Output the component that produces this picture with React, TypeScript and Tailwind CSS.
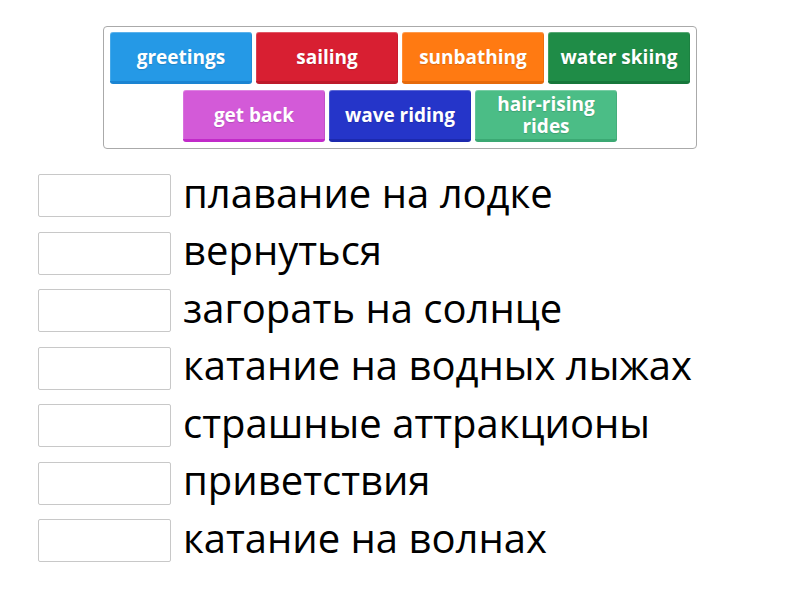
import React from "react";

const tiles1 = [
  { t: "greetings", c: "bg-[#2599e6] border-[#1b84d2]" },
  { t: "sailing", c: "bg-[#d81f32] border-[#bd1a2a]" },
  { t: "sunbathing", c: "bg-[#ff7a12] border-[#e66a0a]" },
  { t: "water skiing", c: "bg-[#1f8c47] border-[#17773b]" },
];
const tiles2 = [
  { t: "get back", c: "bg-[#d35ad8] border-[#c12ac9]" },
  { t: "wave riding", c: "bg-[#2535c9] border-[#1c29ae]" },
  { t: "hair-rising rides", c: "bg-[#4bbd86] border-[#3ba873]" },
];

const rows = [
  "плавание на лодке",
  "вернуться",
  "загорать на солнце",
  "катание на водных лыжах",
  "страшные аттракционы",
  "приветствия",
  "катание на волнах",
];

function Tile({ t, c }: { t: string; c: string }) {
  return (
    <div
      className={`w-[142px] h-[52px] rounded-[3px] border-b-[3px] ${c} flex items-center justify-center text-center text-white font-bold text-[19px] leading-[22px] px-3 shadow-[inset_0_1px_0_rgba(255,255,255,0.25),inset_1px_0_0_rgba(255,255,255,0.15),inset_-1px_0_0_rgba(0,0,0,0.08)]`}
    >
      <span className="[text-shadow:0_1px_1px_rgba(0,0,0,0.15)]">{t}</span>
    </div>
  );
}

export default function App() {
  return (
    <div className="w-[800px] h-[600px] bg-white" style={{ fontFamily: '"Open Sans", sans-serif' }}>
      <div className="pt-[26px] flex justify-center">
        <div className="w-[594px] border border-[#aaaaaa] rounded-[4px] pt-[5px] pb-[6px] flex flex-col gap-[6px]">
          <div className="flex justify-center gap-[4px]">
            {tiles1.map((x) => (
              <Tile key={x.t} {...x} />
            ))}
          </div>
          <div className="flex justify-center gap-[4px]">
            {tiles2.map((x) => (
              <Tile key={x.t} {...x} />
            ))}
          </div>
        </div>
      </div>
      <div className="mt-[25px] ml-[38px] flex flex-col gap-[14.5px]">
        {rows.map((r) => (
          <div key={r} className="flex items-center h-[43px]">
            <div className="w-[133px] h-[43px] border border-[#c8c8c8] rounded-[2px] bg-white shrink-0" />
            <div className="ml-[12px] pb-[6px] text-[40px] leading-none text-black whitespace-nowrap">{r}</div>
          </div>
        ))}
      </div>
    </div>
  );
}
